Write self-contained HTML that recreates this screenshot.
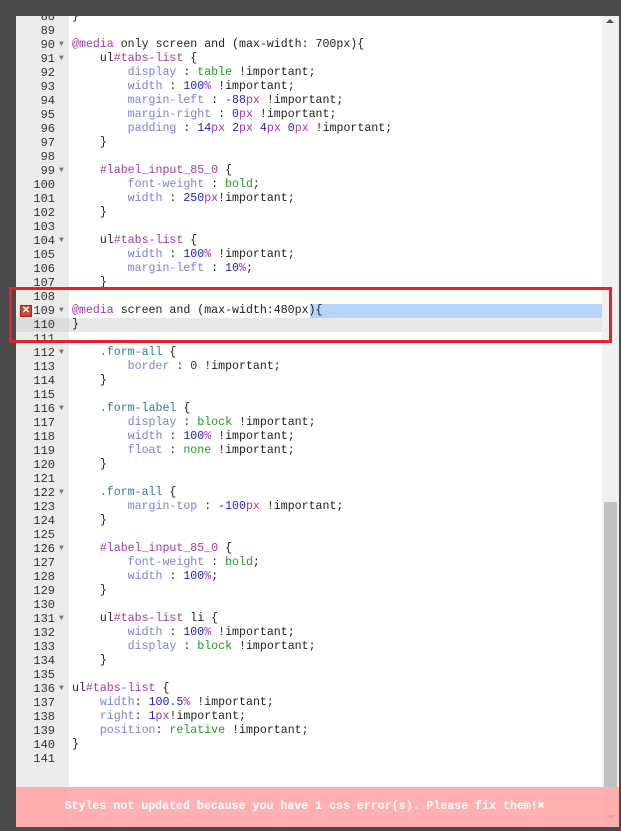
<!DOCTYPE html>
<html><head><meta charset="utf-8"><style>
html,body{margin:0;padding:0;background:#4a4a4a;width:621px;height:831px;overflow:hidden}
#ed{position:absolute;left:16px;top:16px;width:603px;height:811px;background:#fff;overflow:hidden}
#gut{position:absolute;left:0;top:0;width:53px;height:811px;background:#ebebeb}
.l{position:absolute;left:0;width:586px;height:14px;font:11.6px/14px "Liberation Mono","DejaVu Sans Mono",monospace;color:#222;white-space:pre}
.n{position:absolute;left:0;width:39px;text-align:right;color:#333;font-size:12px}
.f{position:absolute;left:43px;top:0;color:#777;font-size:8px}
.c{position:absolute;left:56px}
.p{color:#7d7fdc}.v{color:#2222cc}.u{color:#a33aa3}.k{color:#229922}.a{color:#a33aa3}.s{color:#2a7f8a}.h{color:#a33aa3}
#sb{position:absolute;left:586px;top:0;width:17px;height:811px;background:#f0f0f0}
#th{position:absolute;left:2px;top:486px;width:13px;height:285px;background:#c1c1c1}
#err{position:absolute;left:16px;top:787px;width:603px;height:40px;background:rgba(255,160,160,.82);color:#fff;font:bold 11.6px/40px "Liberation Mono",monospace;white-space:pre}
#box{position:absolute;left:9px;top:287px;width:597px;height:50px;border:3px solid #e8202a}
</style></head><body>
<div id="ed">
<div id="gut"></div>
<div style="position:absolute;left:0;top:302px;width:586px;height:14px;background:#e8e8e8"></div>
<div style="position:absolute;left:0;top:302px;width:53px;height:14px;background:#dcdcdc"></div>
<div style="position:absolute;left:294px;top:288px;width:292px;height:14px;background:#b5d5ff"></div>
<div style="position:absolute;left:4px;top:289px;width:12px;height:12px;background:#d9432f;border:1px solid #9b2a1c;box-sizing:border-box;color:#fff;font:bold 10px/10px 'Liberation Sans',sans-serif;text-align:center">✕</div>
<div id="sb"><div style="position:absolute;left:4px;top:3px;border-left:4px solid transparent;border-right:4px solid transparent;border-bottom:4px solid #505050"></div><div id="th"></div><div style="position:absolute;left:5px;top:799px;border-left:4px solid transparent;border-right:4px solid transparent;border-top:4px solid #a0a0a0"></div></div>
<div id="lines"></div>
</div>
<div id="box"></div>
<div id="err"></div>
<script>
var L=[
[88,0,'}'],[89,0,''],
[90,1,'<span class="a">@media</span> only screen and (max-width: 700px){'],
[91,1,'    ul<span class="h">#tabs-list</span> {'],
[92,0,'        <span class="p">display</span> : <span class="k">table</span> !important;'],
[93,0,'        <span class="p">width</span> : <span class="v">100</span><span class="u">%</span> !important;'],
[94,0,'        <span class="p">margin-left</span> : <span class="v">-88</span><span class="u">px</span> !important;'],
[95,0,'        <span class="p">margin-right</span> : <span class="v">0</span><span class="u">px</span> !important;'],
[96,0,'        <span class="p">padding</span> : <span class="v">14</span><span class="u">px</span> <span class="v">2</span><span class="u">px</span> <span class="v">4</span><span class="u">px</span> <span class="v">0</span><span class="u">px</span> !important;'],
[97,0,'    }'],[98,0,''],
[99,1,'    <span class="h">#label_input_85_0</span> {'],
[100,0,'        <span class="p">font-weight</span> : <span class="k">bold</span>;'],
[101,0,'        <span class="p">width</span> : <span class="v">250</span><span class="u">px</span>!important;'],
[102,0,'    }'],[103,0,''],
[104,1,'    ul<span class="h">#tabs-list</span> {'],
[105,0,'        <span class="p">width</span> : <span class="v">100</span><span class="u">%</span> !important;'],
[106,0,'        <span class="p">margin-left</span> : <span class="v">10</span><span class="u">%</span>;'],
[107,0,'    }'],[108,0,''],
[109,1,'<span class="a">@media</span> screen and (max-width:480px){'],
[110,0,'}'],[111,0,''],
[112,1,'    <span class="s">.form-all</span> {'],
[113,0,'        <span class="p">border</span> : <span class="v">0</span> !important;'],
[114,0,'    }'],[115,0,''],
[116,1,'    <span class="s">.form-label</span> {'],
[117,0,'        <span class="p">display</span> : <span class="k">block</span> !important;'],
[118,0,'        <span class="p">width</span> : <span class="v">100</span><span class="u">%</span> !important;'],
[119,0,'        <span class="p">float</span> : <span class="k">none</span> !important;'],
[120,0,'    }'],[121,0,''],
[122,1,'    <span class="s">.form-all</span> {'],
[123,0,'        <span class="p">margin-top</span> : <span class="v">-100</span><span class="u">px</span> !important;'],
[124,0,'    }'],[125,0,''],
[126,1,'    <span class="h">#label_input_85_0</span> {'],
[127,0,'        <span class="p">font-weight</span> : <span class="k">bold</span>;'],
[128,0,'        <span class="p">width</span> : <span class="v">100</span><span class="u">%</span>;'],
[129,0,'    }'],[130,0,''],
[131,1,'    ul<span class="h">#tabs-list</span> li {'],
[132,0,'        <span class="p">width</span> : <span class="v">100</span><span class="u">%</span> !important;'],
[133,0,'        <span class="p">display</span> : <span class="k">block</span> !important;'],
[134,0,'    }'],[135,0,''],
[136,1,'ul<span class="h">#tabs-list</span> {'],
[137,0,'    <span class="p">width</span>: <span class="v">100.5</span><span class="u">%</span> !important;'],
[138,0,'    <span class="p">right</span>: <span class="v">1</span><span class="u">px</span>!important;'],
[139,0,'    <span class="p">position</span>: <span class="k">relative</span> !important;'],
[140,0,'}'],[141,0,'']];
var h='';
L.forEach(function(r){var t=8+(r[0]-89)*14;h+='<div class="l" style="top:'+t+'px"><span class="n">'+r[0]+'</span>'+(r[1]?'<span class="f">▼</span>':'')+'<span class="c">'+r[2]+'</span></div>';});
document.getElementById('lines').innerHTML=h;
document.getElementById('err').innerHTML='       Styles not updated because you have 1 css error(s). Please fix them!✖';
</script>
</body></html>
